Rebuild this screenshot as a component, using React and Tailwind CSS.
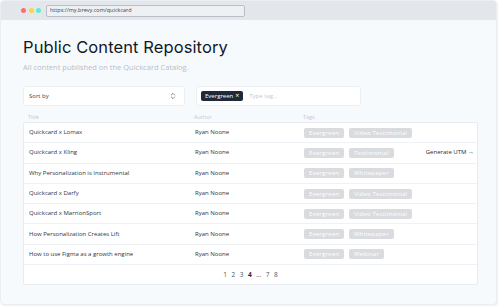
import { ChevronsUpDown } from 'lucide-react';

const rows = [
  { title: 'Quickcard x Lomax', tags: ['Evergreen', 'Video Testimonial'] },
  { title: 'Quickcard x Kling', tags: ['Evergreen', 'Testimonial'], action: true },
  { title: 'Why Personalization is Instrumental', tags: ['Evergreen', 'Whitepaper'] },
  { title: 'Quickcard x Darfy', tags: ['Evergreen', 'Video Testimonial'] },
  { title: 'Quickcard x MarrionSport', tags: ['Evergreen', 'Video Testimonial'] },
  { title: 'How Personalization Creates Lift', tags: ['Evergreen', 'Whitepaper'] },
  { title: 'How to use Figma as a growth engine', tags: ['Evergreen', 'Webinar'] },
];

const pages = ['1', '2', '3', '4', '...', '7', '8'];

const Tag = ({ label }) => (
  <span className="h-[10px] px-[5px] rounded-[2px] bg-[#d9dbde] text-white text-[6px] leading-[10px] tracking-[0.2px]">
    {label}
  </span>
);

export default function App() {
  return (
    <div className="w-[500px] h-[308px] bg-white font-['Open_Sans',sans-serif]">
      <div className="w-[497px] h-[305px] bg-[#f7fafd] rounded-[4px] border border-[#e9eef3] overflow-hidden flex flex-col shadow-[1px_1px_2px_rgba(0,0,0,0.06)]">
        {/* browser chrome */}
        <div className="h-[19px] shrink-0 bg-[#e3e7ec] flex items-center pl-[20px]">
          <div className="flex gap-[2.5px]">
            <span className="w-[5px] h-[5px] rounded-full bg-[#f87171]" />
            <span className="w-[5px] h-[5px] rounded-full bg-[#fcd34d]" />
            <span className="w-[5px] h-[5px] rounded-full bg-[#5eead4]" />
          </div>
          <div className="ml-[5px] w-[199px] h-[12px] rounded-[2px] border border-[#b9bfc7] bg-[#eef1f4] flex items-center pl-[3px] text-[5.5px] text-[#374151]">
            https://my.brevy.com/quickcard
          </div>
        </div>

        <div className="px-[22px] pt-[16px]">
          <h1 className="font-['Inter',sans-serif] text-[16.5px] leading-[22px] text-[#111827] tracking-[0.1px]">
            Public Content Repository
          </h1>
          <p className="mt-[4px] text-[7.5px] leading-[10px] text-[#b8bec7]">
            All content published on the Quickcard Catalog.
          </p>

          <div className="mt-[14px] flex gap-[11px]">
            <div className="w-[162px] h-[20px] bg-white border border-[#eceff3] rounded-[3px] flex items-center justify-between pl-[5px] pr-[7px]">
              <span className="text-[6px] text-[#374151]">Sort by</span>
              <ChevronsUpDown className="w-[8px] h-[8px] text-[#4b5563]" strokeWidth={2} />
            </div>
            <div className="w-[165px] h-[20px] bg-white border border-[#eceff3] rounded-[3px] flex items-center pl-[4px] gap-[6px]">
              <span className="h-[10px] px-[4px] rounded-[2px] bg-[#1e2a3a] text-white text-[6px] leading-[10px] flex items-center gap-[2px]">
                Evergreen <span className="text-[7px]">×</span>
              </span>
              <span className="text-[6px] text-[#c4c9d0]">Type tag...</span>
            </div>
          </div>

          <div className="mt-[6px] grid grid-cols-[166px_109px_1fr] px-[5px] h-[10px] items-center text-[5.5px] text-[#c3c8cf]">
            <span>Title</span>
            <span>Author</span>
            <span>Tags</span>
          </div>

          <div className="w-[455px] bg-white border border-[#e8ecf1] rounded-[2px]">
            {rows.map((row) => (
              <div
                key={row.title}
                className="h-[20.3px] grid grid-cols-[166px_109px_1fr] items-center pl-[5px] pr-[3px] border-b border-[#eef1f5] text-[6px] text-[#2f3540]"
              >
                <span>{row.title}</span>
                <span>Ryan Noone</span>
                <div className="flex items-center justify-between">
                  <div className="flex gap-[5px]">
                    {row.tags.map((t) => (
                      <Tag key={t} label={t} />
                    ))}
                  </div>
                  {row.action && <span className="text-[6px] text-[#1f2937]">Generate UTM →</span>}
                </div>
              </div>
            ))}
            <div className="h-[19px] flex items-center justify-center gap-[4.5px] text-[6.5px] text-[#4b5563]">
              {pages.map((p, i) => (
                <span key={i} className={p === '4' ? 'font-bold text-[#1f2937]' : ''}>
                  {p}
                </span>
              ))}
            </div>
          </div>
        </div>
      </div>
    </div>
  );
}
